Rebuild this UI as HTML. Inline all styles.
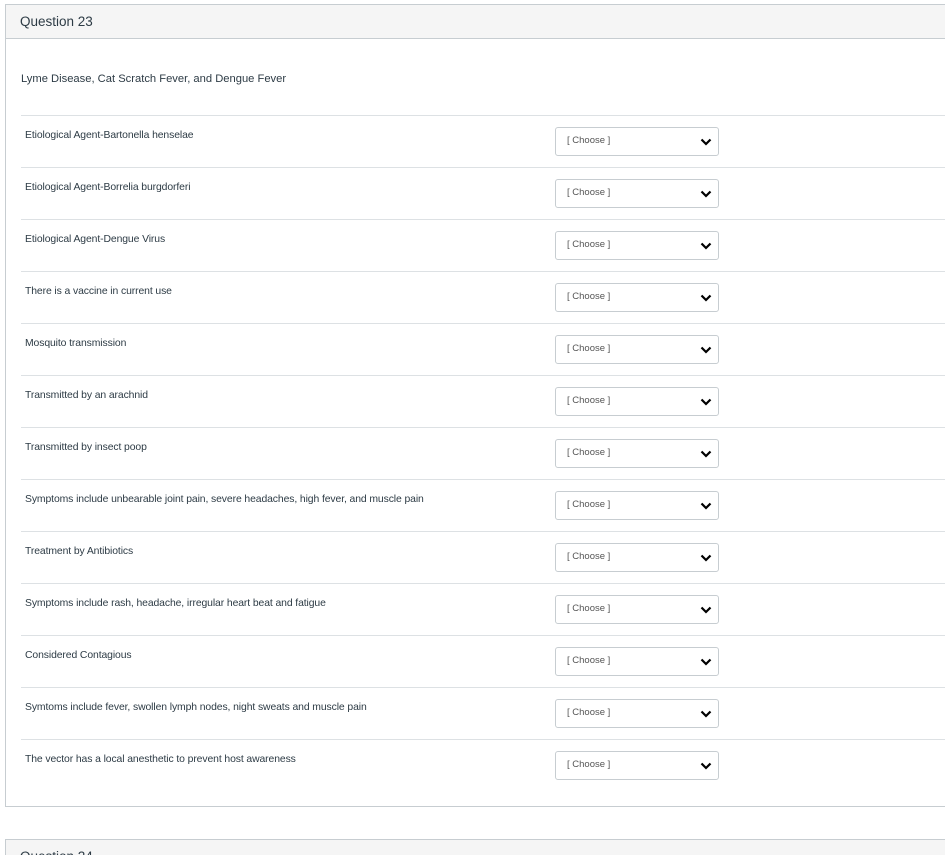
<!DOCTYPE html>
<html style="height:855px;overflow:hidden"><head><style>
body{margin:0;background:#fff;font-family:"Liberation Sans",sans-serif;color:#2d3b45;width:945px;height:855px;overflow:hidden;position:relative}
.q{position:absolute;left:5px;width:960px;border:1px solid #c7cdd1;box-sizing:border-box}
.hd{height:34px;background:#f5f5f5;border-bottom:1px solid #c7cdd1;box-sizing:border-box;padding-left:14px;font-size:13.5px;line-height:33px;color:#2d3b45}
.intro{position:absolute;left:15px;top:68px;font-size:11.2px}
.row{position:absolute;left:15px;width:950px;height:52px;border-top:1px solid #dde1e4;box-sizing:border-box}
.lbl{position:absolute;left:4px;top:14px;font-size:10.4px;letter-spacing:-0.1px}
.sel{position:absolute;left:534px;top:11px;width:164px;height:29px;border:1px solid #c7cdd1;border-radius:3px;box-sizing:border-box;background:#fff}
.sel span{position:absolute;left:11px;top:7px;font-size:9.5px;color:#555}
.sel svg{position:absolute;right:6px;top:10px}
</style></head><body>
<div class="q" style="top:4px;height:803px">
<div class="hd">Question 23</div>
<div class="intro">Lyme Disease, Cat Scratch Fever, and Dengue Fever</div>
<div class="row" style="top:110px"><div class="lbl">Etiological Agent-Bartonella henselae</div><div class="sel"><span>[ Choose ]</span><svg width="12" height="8" viewBox="0 0 12 8"><path d="M1.5 1.5 6 6 10.5 1.5" fill="none" stroke="#000" stroke-width="2.2"/></svg></div></div>
<div class="row" style="top:162px"><div class="lbl">Etiological Agent-Borrelia burgdorferi</div><div class="sel"><span>[ Choose ]</span><svg width="12" height="8" viewBox="0 0 12 8"><path d="M1.5 1.5 6 6 10.5 1.5" fill="none" stroke="#000" stroke-width="2.2"/></svg></div></div>
<div class="row" style="top:214px"><div class="lbl">Etiological Agent-Dengue Virus</div><div class="sel"><span>[ Choose ]</span><svg width="12" height="8" viewBox="0 0 12 8"><path d="M1.5 1.5 6 6 10.5 1.5" fill="none" stroke="#000" stroke-width="2.2"/></svg></div></div>
<div class="row" style="top:266px"><div class="lbl">There is a vaccine in current use</div><div class="sel"><span>[ Choose ]</span><svg width="12" height="8" viewBox="0 0 12 8"><path d="M1.5 1.5 6 6 10.5 1.5" fill="none" stroke="#000" stroke-width="2.2"/></svg></div></div>
<div class="row" style="top:318px"><div class="lbl">Mosquito transmission</div><div class="sel"><span>[ Choose ]</span><svg width="12" height="8" viewBox="0 0 12 8"><path d="M1.5 1.5 6 6 10.5 1.5" fill="none" stroke="#000" stroke-width="2.2"/></svg></div></div>
<div class="row" style="top:370px"><div class="lbl">Transmitted by an arachnid</div><div class="sel"><span>[ Choose ]</span><svg width="12" height="8" viewBox="0 0 12 8"><path d="M1.5 1.5 6 6 10.5 1.5" fill="none" stroke="#000" stroke-width="2.2"/></svg></div></div>
<div class="row" style="top:422px"><div class="lbl">Transmitted by insect poop</div><div class="sel"><span>[ Choose ]</span><svg width="12" height="8" viewBox="0 0 12 8"><path d="M1.5 1.5 6 6 10.5 1.5" fill="none" stroke="#000" stroke-width="2.2"/></svg></div></div>
<div class="row" style="top:474px"><div class="lbl">Symptoms include unbearable joint pain, severe headaches, high fever, and muscle pain</div><div class="sel"><span>[ Choose ]</span><svg width="12" height="8" viewBox="0 0 12 8"><path d="M1.5 1.5 6 6 10.5 1.5" fill="none" stroke="#000" stroke-width="2.2"/></svg></div></div>
<div class="row" style="top:526px"><div class="lbl">Treatment by Antibiotics</div><div class="sel"><span>[ Choose ]</span><svg width="12" height="8" viewBox="0 0 12 8"><path d="M1.5 1.5 6 6 10.5 1.5" fill="none" stroke="#000" stroke-width="2.2"/></svg></div></div>
<div class="row" style="top:578px"><div class="lbl">Symptoms include rash, headache, irregular heart beat and fatigue</div><div class="sel"><span>[ Choose ]</span><svg width="12" height="8" viewBox="0 0 12 8"><path d="M1.5 1.5 6 6 10.5 1.5" fill="none" stroke="#000" stroke-width="2.2"/></svg></div></div>
<div class="row" style="top:630px"><div class="lbl">Considered Contagious</div><div class="sel"><span>[ Choose ]</span><svg width="12" height="8" viewBox="0 0 12 8"><path d="M1.5 1.5 6 6 10.5 1.5" fill="none" stroke="#000" stroke-width="2.2"/></svg></div></div>
<div class="row" style="top:682px"><div class="lbl">Symtoms include fever, swollen lymph nodes, night sweats and muscle pain</div><div class="sel"><span>[ Choose ]</span><svg width="12" height="8" viewBox="0 0 12 8"><path d="M1.5 1.5 6 6 10.5 1.5" fill="none" stroke="#000" stroke-width="2.2"/></svg></div></div>
<div class="row" style="top:734px"><div class="lbl">The vector has a local anesthetic to prevent host awareness</div><div class="sel"><span>[ Choose ]</span><svg width="12" height="8" viewBox="0 0 12 8"><path d="M1.5 1.5 6 6 10.5 1.5" fill="none" stroke="#000" stroke-width="2.2"/></svg></div></div>
</div>
<div class="q" style="top:839px;height:16px;border-bottom:none;background:#f5f5f5;overflow:hidden"><div style="padding-left:14px;font-size:13.5px;line-height:33px;margin-top:0">Question 24</div></div>
</body></html>
